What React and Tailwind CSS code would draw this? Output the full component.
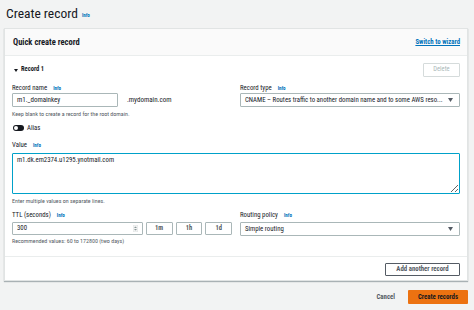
import React from 'react';

const font = { fontFamily: '"Liberation Sans Narrow", "Roboto Condensed", "DejaVu Sans Condensed", Roboto, sans-serif' };

function Info() {
  return <span className="ml-[6px] text-[5px] font-bold text-[#0073bb]">Info</span>;
}

function Label({ children }) {
  return (
    <div className="flex items-center h-[8px] leading-[8px] text-[6.8px] text-[#16191f]">
      {children}
      <Info />
    </div>
  );
}

function Caret() {
  return (
    <svg width="5" height="4" viewBox="0 0 5 4" className="shrink-0">
      <path d="M0 0 L5 0 L2.5 4 Z" fill="#545b64" />
    </svg>
  );
}

function Select({ value }) {
  return (
    <div className="h-[14px] flex items-center justify-between border border-[#aab7b8] rounded-[1px] bg-white pl-[4px] pr-[6px] text-[6.8px] text-[#16191f] whitespace-nowrap overflow-hidden">
      <span>{value}</span>
      <Caret />
    </div>
  );
}

function SmallBtn({ children }) {
  return (
    <div className="w-[27px] h-[13px] flex items-center justify-center border border-[#aab7b8] rounded-[1px] bg-white text-[6.5px] font-bold text-[#545b64]">
      {children}
    </div>
  );
}

export default function App() {
  return (
    <div className="w-[474px] h-[310px] bg-[#f2f3f3] overflow-hidden" style={font}>
      {/* Title */}
      <div className="h-[28px] flex items-center pl-[6px]">
        <h1 className="text-[13.5px] leading-none text-[#16191f]">Create record</h1>
        <span className="ml-[4px] mt-[3px] text-[5px] font-bold text-[#0073bb]">Info</span>
      </div>

      {/* Card */}
      <div className="ml-[4px] w-[464px] bg-white border border-[#e1e4e4] shadow-[0_1px_1px_rgba(0,28,36,0.3)]">
        <div className="h-[27px] bg-[#fafafa] border-b border-[#eaeded] flex items-center justify-between pl-[8px] pr-[7px]">
          <span className="text-[8.5px] font-bold text-[#16191f]">Quick create record</span>
          <span className="text-[6.8px] font-bold text-[#0073bb] underline">Switch to wizard</span>
        </div>

        <div className="px-[7px] pt-[7px] pb-[4px]">
          {/* Record 1 header */}
          <div className="h-[14px] flex items-center justify-between">
            <div className="flex items-center pl-[2px]">
              <svg width="4" height="3" viewBox="0 0 4 3"><path d="M0 0 L4 0 L2 3 Z" fill="#16191f" /></svg>
              <span className="ml-[3px] text-[6.5px] font-bold text-[#16191f]">Record 1</span>
            </div>
            <div className="w-[37px] h-[14px] flex items-center justify-center border border-[#d5dbdb] rounded-[1px] text-[6.5px] text-[#aab7b8]">
              Delete
            </div>
          </div>

          <div className="grid grid-cols-2 gap-x-[8px] mt-[7px]">
            <div>
              <Label>Record name</Label>
              <div className="flex items-center mt-[1px]">
                <div className="w-[106px] h-[14px] flex items-center border border-[#aab7b8] rounded-[1px] px-[4px] text-[7px] text-[#16191f]">
                  m1._domainkey
                </div>
                <span className="ml-[9px] text-[7px] text-[#16191f]">.mydomain.com</span>
              </div>
              <div className="mt-[3px] h-[8px] leading-[8px] text-[6px] text-[#545b64]">
                Keep blank to create a record for the root domain.
              </div>
              <div className="mt-[5px] h-[10px] flex items-center pl-[1px]">
                <div className="w-[11px] h-[6px] rounded-full bg-[#16191f] relative">
                  <div className="absolute left-[1px] top-[1px] w-[4px] h-[4px] rounded-full bg-white" />
                </div>
                <span className="ml-[3px] text-[6.8px] text-[#16191f]">Alias</span>
              </div>
            </div>
            <div>
              <Label>Record type</Label>
              <div className="mt-[1px]">
                <Select value="CNAME – Routes traffic to another domain name and to some AWS reso..." />
              </div>
            </div>
          </div>

          <div className="mt-[8px]">
            <Label>Value</Label>
            <textarea
              readOnly
              defaultValue="m1.dk.em2374.u1295.ynotmail.com"
              className="block mt-[4px] w-[448px] h-[41px] border border-[#00a1c9] rounded-[1px] px-[4px] py-[2px] text-[6.8px] leading-[8px] text-[#16191f] outline-none resize"
              style={font}
            />
            <div className="mt-[3px] h-[8px] leading-[8px] text-[6px] text-[#545b64]">
              Enter multiple values on separate lines.
            </div>
          </div>

          <div className="grid grid-cols-2 gap-x-[8px] mt-[6px]">
            <div>
              <Label>TTL (seconds)</Label>
              <div className="mt-[3px] flex items-center gap-[3px]">
                <div className="w-[132px] h-[13px] flex items-center justify-between border border-[#aab7b8] rounded-[1px] pl-[4px] pr-[4px] text-[6.8px] text-[#16191f]">
                  <span>300</span>
                  <svg width="5" height="7" viewBox="0 0 5 7">
                    <rect x="0" y="0" width="5" height="7" fill="#f2f3f3" stroke="#d5dbdb" strokeWidth="0.5" />
                    <path d="M1 3 L2.5 1.5 L4 3 Z M1 4 L2.5 5.5 L4 4 Z" fill="#879596" />
                  </svg>
                </div>
                <SmallBtn>1m</SmallBtn>
                <SmallBtn>1h</SmallBtn>
                <SmallBtn>1d</SmallBtn>
              </div>
              <div className="mt-[2px] h-[8px] leading-[8px] text-[6px] text-[#545b64]">
                Recommended values: 60 to 172800 (two days)
              </div>
            </div>
            <div>
              <Label>Routing policy</Label>
              <div className="mt-[3px]">
                <Select value="Simple routing" />
              </div>
            </div>
          </div>
        </div>

        <div className="border-t border-[#eaeded] mt-[7px] flex justify-end pt-[6px] pb-[4px] pr-[7px]">
          <div className="w-[75px] h-[13px] flex items-center justify-center border border-[#545b64] rounded-[1px] text-[6.8px] font-bold text-[#545b64]">
            Add another record
          </div>
        </div>
      </div>

      {/* Footer */}
      <div className="mt-[9px] flex items-center justify-end pr-[6px]">
        <span className="text-[6.8px] font-bold text-[#545b64] mr-[13px]">Cancel</span>
        <div className="w-[60px] h-[14px] flex items-center justify-center bg-[#ec7211] rounded-[1px] text-[6.8px] font-bold text-[#16191f]">
          Create records
        </div>
      </div>
    </div>
  );
}
